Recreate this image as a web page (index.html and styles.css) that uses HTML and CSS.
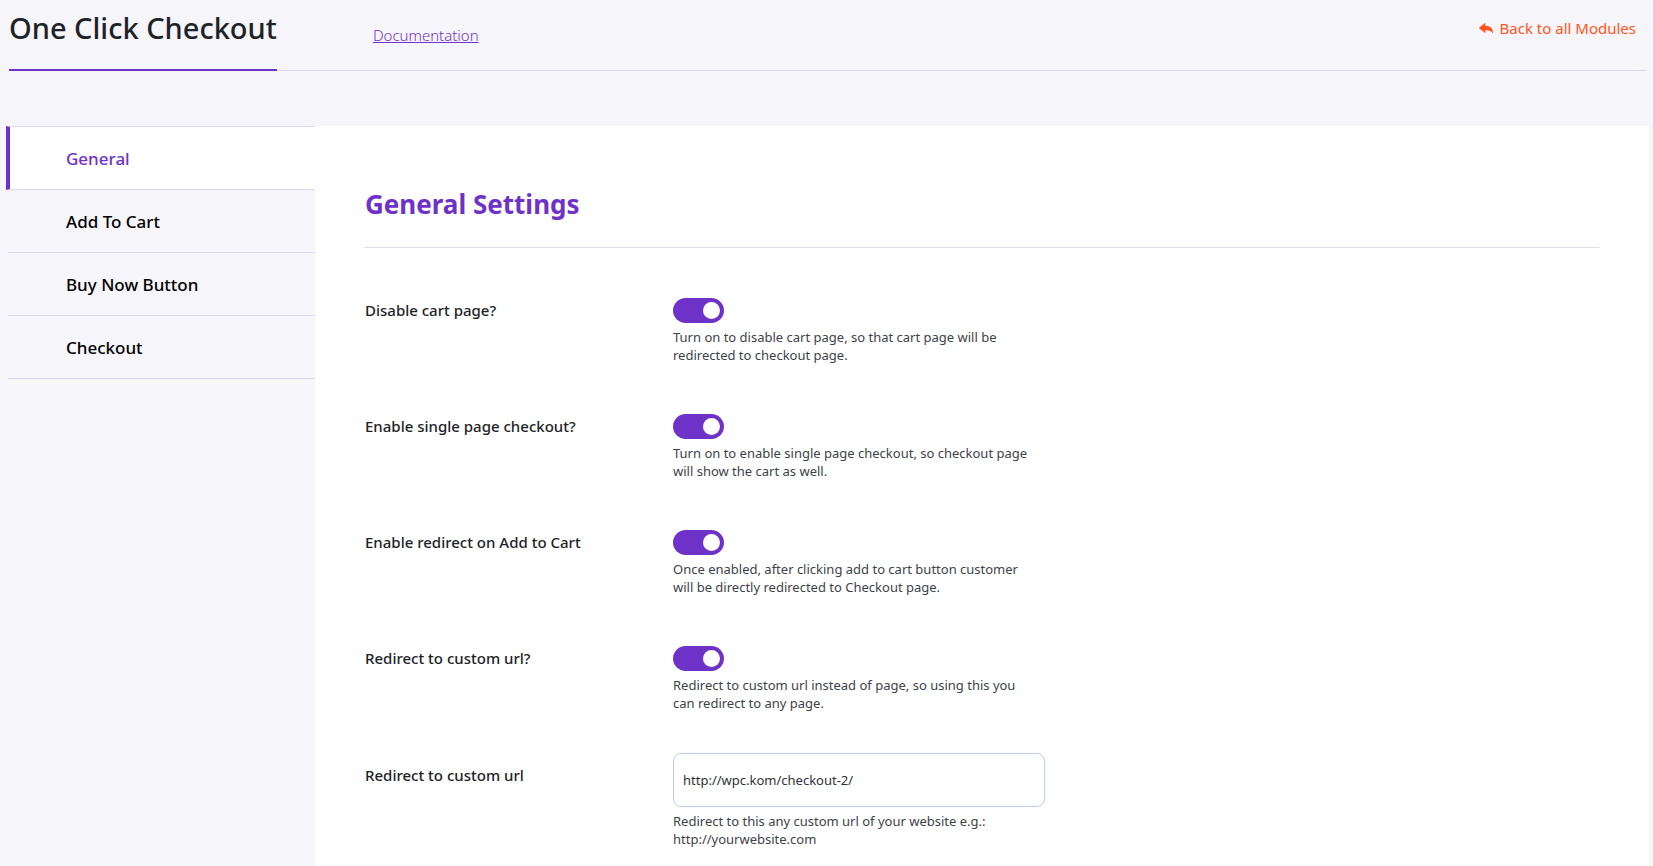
FILE: index.html
```html
<!DOCTYPE html>
<html lang="en">

<head>
  <meta charset="utf-8">
  <title>One Click Checkout</title>
  <link rel="stylesheet" href="styles.css">
</head>

<body>
  <header class="page-header">
    <h1>One Click Checkout</h1>
    <a href="#" class="doc-link">Documentation</a>
    <a href="#" class="back-link">
      <svg width="14" height="11" viewBox="0 0 14 11" aria-hidden="true">
        <path d="M5.8 0.2 C6.1 0 6.4 0.1 6.4 0.5 V2.8 C11 3 14 4.4 14 10.4 C12.6 7.9 10.4 7.2 6.4 7.2 V9.4 C6.4 9.8 6.1 9.9 5.8 9.7 L0.3 5.4 C0 5.1 0 4.9 0.3 4.6 Z" fill="#ff5722" />
      </svg>
      Back to all Modules
    </a>
  </header>

  <div class="settings">
    <nav class="tabs">
      <a href="#general" class="tab active">General</a>
      <a href="#add-to-cart" class="tab">Add To Cart</a>
      <a href="#buy-now" class="tab">Buy Now Button</a>
      <a href="#checkout" class="tab">Checkout</a>
    </nav>

    <main class="panel" id="general">
      <h2>General Settings</h2>

      <form>
        <div class="field">
          <label for="disable_cart">Disable cart page?</label>
          <div class="control">
            <input type="checkbox" class="switch" id="disable_cart" checked>
            <p>Turn on to disable cart page, so that cart page will be redirected to checkout page.</p>
          </div>
        </div>
        <div class="field">
          <label for="single_page">Enable single page checkout?</label>
          <div class="control">
            <input type="checkbox" class="switch" id="single_page" checked>
            <p>Turn on to enable single page checkout, so checkout page will show the cart as well.</p>
          </div>
        </div>
        <div class="field">
          <label for="redirect_cart">Enable redirect on Add to Cart</label>
          <div class="control">
            <input type="checkbox" class="switch" id="redirect_cart" checked>
            <p>Once enabled, after clicking add to cart button customer will be directly redirected to Checkout page.</p>
          </div>
        </div>
        <div class="field">
          <label for="redirect_custom">Redirect to custom url?</label>
          <div class="control">
            <input type="checkbox" class="switch" id="redirect_custom" checked>
            <p>Redirect to custom url instead of page, so using this you can redirect to any page.</p>
          </div>
        </div>
        <div class="field text-field">
          <label for="custom_url">Redirect to custom url</label>
          <div class="control">
            <input type="text" class="text-input" id="custom_url" value="http://wpc.kom/checkout-2/">
            <p>Redirect to this any custom url of your website e.g.: http://yourwebsite.com</p>
          </div>
        </div>
      </form>
    </main>
  </div>
</body>

</html>
```
FILE: styles.css
```css
* {
  box-sizing: border-box;
}

body {
  margin: 0;
  min-height: 100vh;
  display: flex;
  flex-direction: column;
  background: #f6f5fa;
  color: #1d2327;
  font-family: "Segoe UI", "Noto Sans", sans-serif;
  font-size: 15px;
}

/* header */
.page-header {
  display: flex;
  align-items: flex-start;
  margin: 0 7px 55px 9px;
  border-bottom: 1px solid #dad7ee;
}

.page-header h1 {
  margin: 0 0 -1px;
  padding: 8px 0 21px;
  font-size: 29px;
  font-weight: 500;
  line-height: 40px;
  border-bottom: 2px solid #6e32c9;
}

.doc-link {
  margin: 23px 0 0 96px;
  line-height: 24px;
  font-weight: 300;
  color: #6e32c9;
}

.back-link {
  display: flex;
  align-items: center;
  gap: 7px;
  margin: 16px 10px 0 auto;
  line-height: 24px;
  color: #ff5722;
  text-decoration: none;
}

.settings {
  flex: 1;
  display: flex;
  margin: 0 4px 0 6px;
}

/* side menu */
.tabs {
  flex: 0 0 309px;
}

.tab {
  display: block;
  height: 63px;
  margin-left: 2px;
  padding-left: 58px;
  line-height: 64px;
  border-bottom: 1px solid #dad7ee;
  color: #000;
  font-size: 17px;
  font-weight: 500;
  text-decoration: none;
}

.tab.active {
  height: 64px;
  margin-left: 0;
  padding-left: 56px;
  background: #fff;
  border-top: 1px solid #dad7ee;
  border-left: 4px solid #6e32c9;
  color: #6e32c9;
}

/* content */
.panel {
  flex: 1;
  padding: 59px 50px 0;
  background: #fff;
}

.panel h2 {
  margin: 0 0 50px;
  padding-bottom: 23px;
  border-bottom: 1px solid #dedeee;
  color: #6e32c9;
  font-size: 26px;
  font-weight: 700;
  line-height: 39px;
}

.field {
  display: grid;
  grid-template-columns: 308px 372px;
}

.field + .field {
  margin-top: 50px;
}

.field label {
  font-weight: 500;
  line-height: 25px;
}

.field + .text-field {
  margin-top: 41px;
}

.text-field label {
  padding-top: 10px;
}

.control p {
  max-width: 360px;
  margin: 5px 0 0;
  color: #3c434a;
  font-size: 13px;
  line-height: 18px;
}

.switch {
  appearance: none;
  display: block;
  width: 51px;
  height: 25px;
  margin: 0;
  padding: 4px;
  border-radius: 13px;
  background: #ccc;
  cursor: pointer;
}

.switch::before {
  content: "";
  display: block;
  width: 17px;
  height: 17px;
  border-radius: 50%;
  background: #fff;
}

.switch:checked {
  background: #6e32c9;
}

.switch:checked::before {
  margin-left: auto;
}

.text-input {
  display: block;
  width: 100%;
  height: 54px;
  padding: 0 9px;
  border: 1px solid #c0cbf0;
  border-radius: 8px;
  background: #fff;
  color: #2c3338;
  font-family: inherit;
  font-size: 13px;
}
```
